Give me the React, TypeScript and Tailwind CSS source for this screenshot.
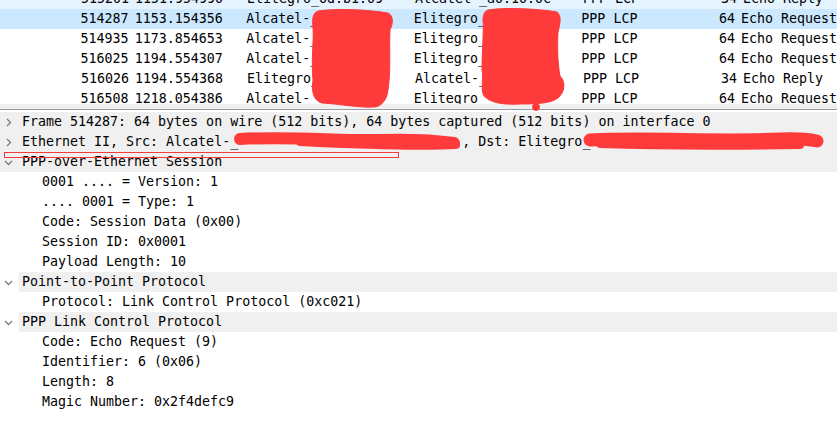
import React from 'react';

type Packet = {
  no: string;
  time: string;
  src: string;
  dst: string;
  proto: string;
  len: string;
  info: string;
  bg?: string;
};

const packets: Packet[] = [
  { no: '515201', time: '1151.954990', src: 'Elitegro_6d:b1:09', dst: 'Alcatel-_a0:10:0c', proto: 'PPP LCP', len: '34', info: 'Echo Reply', bg: 'bg-[#e5f3ff]' },
  { no: '514287', time: '1153.154356', src: 'Alcatel-_', dst: 'Elitegro_', proto: 'PPP LCP', len: '64', info: 'Echo Request', bg: 'bg-[#cce8ff]' },
  { no: '514935', time: '1173.854653', src: 'Alcatel-_', dst: 'Elitegro_', proto: 'PPP LCP', len: '64', info: 'Echo Request' },
  { no: '516025', time: '1194.554307', src: 'Alcatel-_', dst: 'Elitegro_', proto: 'PPP LCP', len: '64', info: 'Echo Request' },
  { no: '516026', time: '1194.554368', src: 'Elitegro_', dst: 'Alcatel-_', proto: 'PPP LCP', len: '34', info: 'Echo Reply' },
  { no: '516508', time: '1218.054386', src: 'Alcatel-_', dst: 'Elitegro_', proto: 'PPP LCP', len: '64', info: 'Echo Request' },
];

type Node = { text: string; level: 0 | 1; open?: boolean; full?: boolean };

const details: Node[] = [
  { text: 'Frame 514287: 64 bytes on wire (512 bits), 64 bytes captured (512 bits) on interface 0', level: 0, open: false, full: true },
  { text: 'Ethernet II, Src: Alcatel-_                           ., Dst: Elitegro_', level: 0, open: false, full: true },
  { text: 'PPP-over-Ethernet Session', level: 0, open: true, full: true },
  { text: '0001 .... = Version: 1', level: 1 },
  { text: '.... 0001 = Type: 1', level: 1 },
  { text: 'Code: Session Data (0x00)', level: 1 },
  { text: 'Session ID: 0x0001', level: 1 },
  { text: 'Payload Length: 10', level: 1 },
  { text: 'Point-to-Point Protocol', level: 0, open: true },
  { text: 'Protocol: Link Control Protocol (0xc021)', level: 1 },
  { text: 'PPP Link Control Protocol', level: 0, open: true },
  { text: 'Code: Echo Request (9)', level: 1 },
  { text: 'Identifier: 6 (0x06)', level: 1 },
  { text: 'Length: 8', level: 1 },
  { text: 'Magic Number: 0x2f4defc9', level: 1 },
];

function Arrow({ open }: { open?: boolean }) {
  return (
    <svg width="19" height="20" viewBox="0 0 19 20" className="shrink-0">
      {open ? (
        <polyline points="5,9 8.5,12.5 12,9" fill="none" stroke="#7a7a7a" strokeWidth="1.3" />
      ) : (
        <polyline points="7,7 10.5,10.5 7,14" fill="none" stroke="#7a7a7a" strokeWidth="1.3" />
      )}
    </svg>
  );
}

export default function App() {
  return (
    <div className="relative w-[837px] h-[430px] overflow-hidden bg-white text-black font-['DejaVu_Sans_Mono',monospace] text-[13.3px]">
      {/* packet list */}
      <div className="h-[104px] overflow-hidden">
        <div className="-mt-[11px]">
          {packets.map((p) => (
            <div key={p.no} className={`flex h-[20px] leading-[20px] whitespace-pre ${p.bg ?? ''}`}>
              <div className="w-[129px] text-right">{p.no}</div>
              <div className="ml-[6px] w-[112px]">{p.time}</div>
              <div className="w-[168px]">{p.src}</div>
              <div className="w-[168px]">{p.dst}</div>
              <div className="w-[120px]">{p.proto}</div>
              <div className="w-[34px] text-right">{p.len}</div>
              <div className="ml-[6px]">{p.info}</div>
            </div>
          ))}
        </div>
      </div>
      <div className="h-[5px] bg-[#f0f0f0]" />
      <div className="h-px bg-[#9a9ca3]" />

      {/* packet details */}
      <div className="pt-[2px]">
        {details.map((d, i) => (
          <div
            key={i}
            className={`flex h-[20px] leading-[20px] whitespace-pre ${d.full ? 'bg-[#f0f0f0]' : ''}`}
          >
            {d.level === 0 ? (
              <>
                <Arrow open={d.open} />
                <div className="flex-1 pl-[3px] bg-[#f0f0f0]">{d.text}</div>
              </>
            ) : (
              <div className="pl-[42px]">{d.text}</div>
            )}
          </div>
        ))}
      </div>

      <div className="absolute left-[4px] top-[152px] w-[395px] h-[6px] border border-[#f23b3b]" />

      {/* redaction scribbles */}
      <svg className="absolute inset-0 pointer-events-none" width="837" height="430">
        <g fill="#fe3a3a" stroke="#fe3a3a" strokeLinejoin="round">
          <path d="M318 11 C340 8 370 10 388 13 C394 16 393 24 390 30 C389 50 391 70 388 90 C387 100 381 107 374 107 C360 108 340 104 322 103 C314 101 311 92 313 80 C311 60 314 40 313 28 C312 18 313 13 318 11 Z" />
          <path d="M488 10 C505 7 540 9 557 12 C562 16 560 24 558 32 C557 50 558 65 560 76 C566 82 565 92 558 98 C552 102 545 104 520 104 C500 105 490 102 484 96 C480 88 484 80 482 70 C482 50 484 30 483 20 C483 14 485 11 488 10 Z" />
          <circle cx="536" cy="107" r="3.5" />
        </g>
        <g fill="none" stroke="#fe3a3a" strokeLinecap="round">
          <path d="M240 139 C290 136 340 141 380 140 C410 139 440 141 454 143" strokeWidth="12" />
          <path d="M300 142 C360 145 420 147 456 145" strokeWidth="8" />
          <path d="M590 140 C650 137 720 142 780 139 C800 138 812 140 817 141" strokeWidth="13" />
          <path d="M600 144 C660 146 730 146 800 145" strokeWidth="8" />
        </g>
      </svg>
    </div>
  );
}
